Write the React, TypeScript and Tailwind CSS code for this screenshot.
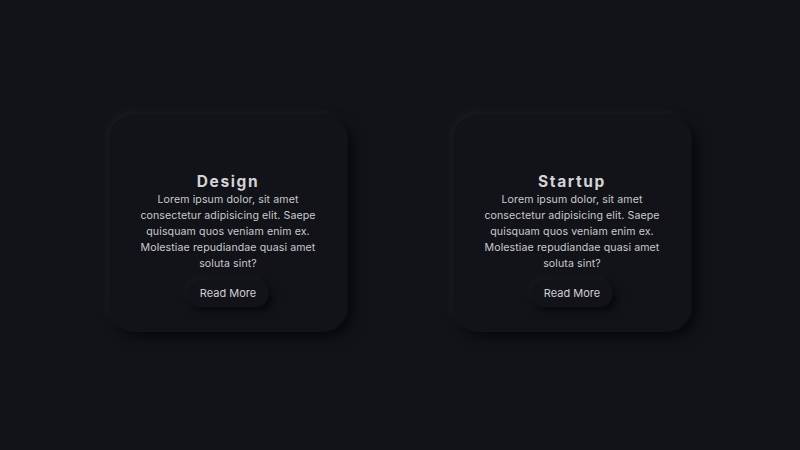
const cards = [
  { title: 'Design' },
  { title: 'Startup' },
];

const lines = [
  'Lorem ipsum dolor, sit amet',
  'consectetur adipisicing elit. Saepe',
  'quisquam quos veniam enim ex.',
  'Molestiae repudiandae quasi amet',
  'soluta sint?',
];

const Card = ({ title }: { title: string }) => (
  <div className="w-[239px] h-[218px] rounded-[26px] bg-[#121319] flex flex-col items-center pt-[59px] shadow-[-4px_-4px_8px_rgba(255,255,255,0.035),6px_6px_12px_rgba(0,0,0,0.55)]">
    <h2 className="text-[15.5px] leading-[18px] font-bold tracking-[1.6px] text-[#d4d4d6]">{title}</h2>
    <p className="mt-[1px] text-center text-[10.6px] leading-[16px] tracking-[0.1px] text-[#c9c9cc]">
      {lines.map((l) => (
        <span key={l} className="block whitespace-nowrap">{l}</span>
      ))}
    </p>
    <button className="mt-[8px] h-[27px] w-[82px] rounded-full bg-[#121319] text-[11px] text-[#cfcfd2] shadow-[-3px_-3px_6px_rgba(255,255,255,0.03),4px_4px_8px_rgba(0,0,0,0.6)]">
      Read More
    </button>
  </div>
);

export default function App() {
  return (
    <div
      className="w-[800px] h-[450px] bg-[#121319] flex items-center justify-center gap-[105px] pb-[4px]"
      style={{ fontFamily: '"Inter", "Noto Sans", sans-serif' }}
    >
      {cards.map((c) => (
        <Card key={c.title} title={c.title} />
      ))}
    </div>
  );
}
